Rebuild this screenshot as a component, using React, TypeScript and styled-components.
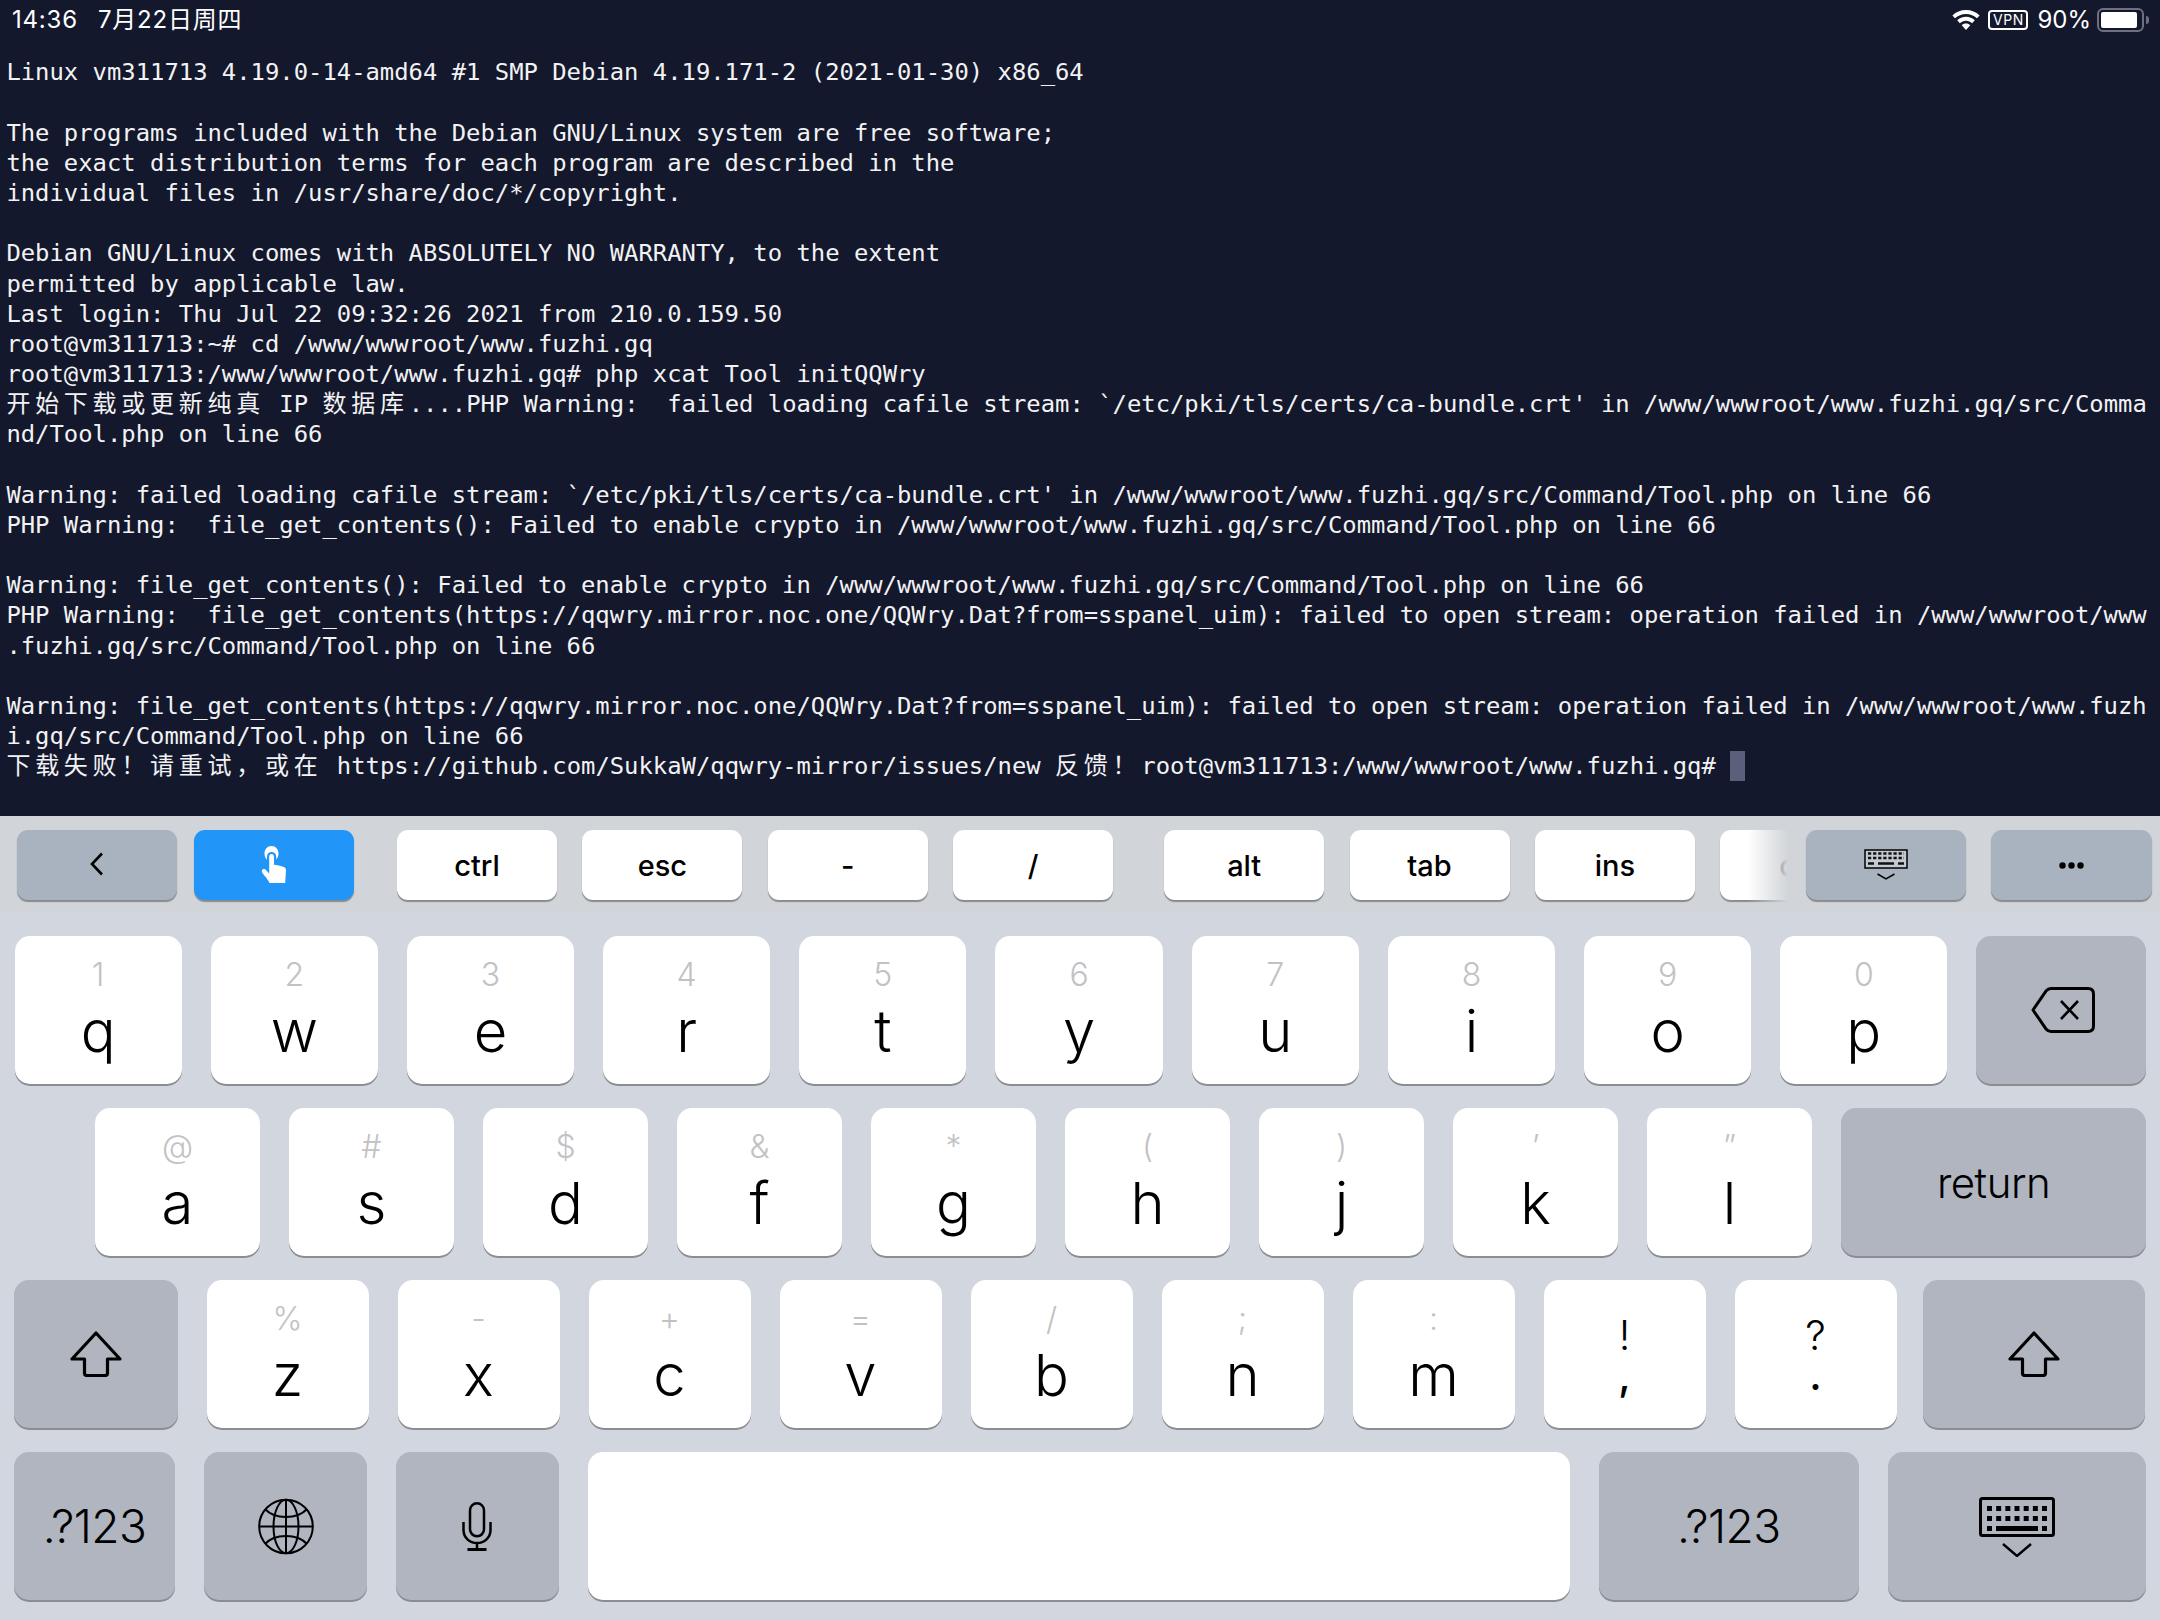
import React from 'react'
import styled, { createGlobalStyle } from 'styled-components'

const CELL = 14.37

const GlobalStyle = createGlobalStyle`
  html, body {
    margin: 0;
    padding: 0;
    width: 2160px;
    height: 1620px;
    overflow: hidden;
    background: #14182c;
  }
`

const Page = styled.div`
  width: 2160px;
  height: 1620px;
  display: flex;
  flex-direction: column;
  font-family: Inter, "Noto Sans CJK SC", sans-serif;
`

/* status bar + terminal */
const Terminal = styled.div`
  height: 816px;
  flex-shrink: 0;
  background: #14182c;
  color: #f2f2f4;
`

const StatusBar = styled.div`
  height: 57.3px;
  padding: 0 16px 0 12px;
  box-sizing: border-box;
  display: flex;
  align-items: flex-start;
  justify-content: space-between;
  color: #fff;
  font-size: 24px;
  line-height: 40px;
`

const StatusLeft = styled.div`
  display: flex;
  gap: 20px;
  letter-spacing: 0.8px;
`

const StatusRight = styled.div`
  display: flex;
  align-items: center;
  height: 40px;
`

const VpnBadge = styled.div`
  width: 40px;
  height: 20px;
  margin-left: 8px;
  box-sizing: border-box;
  border: 2px solid #fff;
  border-radius: 4px;
  font-size: 14px;
  line-height: 16px;
  text-align: center;
  letter-spacing: 0.5px;
`

const Percent = styled.div`
  margin-left: 9px;
`

const Battery = styled.div`
  position: relative;
  width: 47px;
  height: 24px;
  margin-left: 6px;
  box-sizing: border-box;
  border: 2px solid #6e7080;
  border-radius: 6px;
  padding: 2px;

  &::after {
    content: '';
    position: absolute;
    right: -7px;
    top: 6px;
    width: 3px;
    height: 8px;
    background: #6e7080;
    border-radius: 0 3px 3px 0;
  }
`

const BatteryFill = styled.div`
  width: 36px;
  height: 16px;
  background: #fff;
  border-radius: 2px;
`

const Screen = styled.div`
  padding-left: 6.4px;
  font-family: "DejaVu Sans Mono", monospace;
  font-size: 23.87px;
`

const Row = styled.div`
  height: 30.18px;
  line-height: 30.18px;
  white-space: pre;
`

const Wide = styled.span`
  display: inline-block;
  width: ${CELL * 2}px;
  font-family: "Noto Sans CJK SC", sans-serif;
  font-size: 24px;
  line-height: 24px;
`

const Cursor = styled.span`
  display: inline-block;
  width: ${CELL}px;
  height: 30px;
  vertical-align: top;
  background: #5a5f7b;
`

/* shortcut bar */
const Toolbar = styled.div`
  height: 97px;
  flex-shrink: 0;
  box-sizing: border-box;
  padding: 14px 8px 0 17px;
  display: flex;
  background: #d1d4d9;
`

const ToolGroup = styled.div<{ $gap: number; $before?: number }>`
  display: flex;
  flex-shrink: 0;
  gap: ${(p) => p.$gap}px;
  margin-left: ${(p) => p.$before ?? 0}px;
`

const Scroller = styled.div`
  position: relative;
  flex: 1;
  min-width: 0;
  height: 76px;
  margin-left: 43px;
  overflow: hidden;
  display: flex;

  &::after {
    content: '';
    position: absolute;
    top: 0;
    right: 0;
    bottom: 0;
    width: 40px;
    background: linear-gradient(90deg, rgba(209, 212, 217, 0), #d1d4d9);
  }
`

const ToolKey = styled.div<{ $tone?: 'white' | 'slate' | 'blue'; $w?: number }>`
  width: ${(p) => p.$w ?? 160}px;
  height: 70px;
  flex-shrink: 0;
  border-radius: 11px;
  display: flex;
  flex-direction: column;
  align-items: center;
  justify-content: center;
  background: ${(p) => (p.$tone === 'slate' ? '#a8b3bf' : p.$tone === 'blue' ? '#2196f8' : '#fff')};
  box-shadow: 0 2px 1px rgba(0, 0, 0, 0.35);
  font-size: 29px;
  font-weight: 500;
  color: #000;
`

/* keyboard */
const Keyboard = styled.div`
  flex: 1;
  box-sizing: border-box;
  padding-top: 23px;
  display: flex;
  flex-direction: column;
  gap: 24px;
  background: #d2d6de;
`

const KeyRow = styled.div<{ $inset: number }>`
  display: flex;
  gap: 29px;
  padding-left: ${(p) => p.$inset}px;
`

const Key = styled.div<{ $w: number; $fn?: boolean }>`
  width: ${(p) => p.$w}px;
  height: 148px;
  flex-shrink: 0;
  box-sizing: border-box;
  border-radius: 15px;
  display: flex;
  flex-direction: column;
  align-items: center;
  justify-content: center;
  background: ${(p) => (p.$fn ? '#b0b5c0' : '#fff')};
  box-shadow: 0 2px 0 #8c8d92;
  color: #000;
`

const RightShift = styled(Key)`
  margin-left: -2.5px;
`

const LetterBody = styled(Key)`
  justify-content: flex-start;
  padding-top: 18.5px;
`

const Hint = styled.div`
  height: 40px;
  font-size: 32px;
  line-height: 40px;
  font-weight: 300;
  color: #c2c2c4;
`

const Letter = styled.div`
  font-size: 58px;
  line-height: 73px;
  font-weight: 300;
`

const PunctBody = styled(Key)`
  justify-content: flex-start;
  padding-top: 35px;
`

const Punct = styled.div<{ $strong?: boolean }>`
  height: 40px;
  font-size: 41px;
  line-height: 40px;
  font-weight: ${(p) => (p.$strong ? 500 : 300)};
`

const FnLabel = styled.div<{ $size: number; $weight?: number }>`
  font-size: ${(p) => p.$size}px;
  font-weight: ${(p) => p.$weight ?? 300};
  letter-spacing: -0.5px;
`

/* icons */
const Glyph = styled.svg<{ $dx?: number; $dy?: number }>`
  display: block;
  margin-left: ${(p) => p.$dx ?? 0}px;
  margin-top: ${(p) => p.$dy ?? 0}px;
`

const ChevronLeft = () => (
  <Glyph $dy={-3} width="16" height="24" viewBox="0 0 16 24" fill="none" stroke="#000" strokeWidth="2.6">
    <path d="M13 1.5 3 12l10 10.5" />
  </Glyph>
)

const TouchHand = () => (
  <Glyph $dx={2} $dy={-3} width="30" height="38" viewBox="0 0 30 38" fill="#fff">
    <path fillRule="evenodd" d="M11.5 1c4.2 0 7 3.4 7 7.6 0 2.6-1 4.6-2.3 6V11.5c0-2.8-2-4.6-4.6-4.6S7 8.7 7 11.5v3.3c-1.5-1.4-2.5-3.6-2.5-6.2C4.500 4.400 7.300 1 11.500 1z" />
    <path d="M9.200 11.500c0-1.500 1-2.500 2.400-2.500s2.400 1 2.400 2.500v8.300c3 .2 6.300.9 9 1.900 2 .7 3 1.700 3 3.500l-.8 12.800H9.500c-.5-2-3.500-5.500-7-10-1.200-1.600-.8-3 .4-3.700 1.300-.7 2.500 0 3.500 1.100l2.800 3.100z" />
  </Glyph>
)

const SmallKeyboard = () => (
  <Glyph $dy={-1} width="44" height="32" viewBox="0 0 44 32">
    <rect x="1" y="1" width="42" height="18" fill="#c3cad2" stroke="#000" strokeWidth="1.500" />
    <path d="M4 4.500h36M4 9h36" stroke="#111" strokeWidth="2.500" strokeDasharray="3.200 1.900" />
    <path d="M4 14.500h6M14 14.500h16M34 14.500h6" stroke="#111" strokeWidth="2.500" />
    <path d="M13.500 25 22 30l8.500-5" fill="none" stroke="#000" strokeWidth="1.500" />
  </Glyph>
)

const Dots = () => (
  <Glyph width="25" height="7" viewBox="0 0 25 7" fill="#000">
    <circle cx="3.500" cy="3.500" r="3.200" />
    <circle cx="12.500" cy="3.500" r="3.200" />
    <circle cx="21.500" cy="3.500" r="3.200" />
  </Glyph>
)

const Backspace = () => (
  <Glyph $dx={4} width="64" height="46" viewBox="0 0 64 46" fill="none" stroke="#000" strokeWidth="3" strokeLinejoin="round">
    <path d="M20 1.500h37c3.500 0 5.500 2 5.500 5.500v32c0 3.500-2 5.500-5.500 5.500H20c-2 0-3.500-.7-4.700-2.200L2 23 15.300 3.700C16.500 2.200 18 1.500 20 1.500z" />
    <path d="M30 14l17 18M47 14 30 32" strokeWidth="2.600" />
  </Glyph>
)

const ShiftArrow = () => (
  <Glyph width="52" height="46" viewBox="0 0 52 46" fill="none" stroke="#000" strokeWidth="3.200" strokeLinejoin="round">
    <path d="M26 2 2 28h12.500v14c0 1.500 1 2.500 2.500 2.500h18c1.500 0 2.500-1 2.500-2.500V28H50z" />
  </Glyph>
)

const Globe = () => (
  <Glyph width="56" height="57" viewBox="0 0 56 57" fill="none" stroke="#000" strokeWidth="2">
    <circle cx="28" cy="28.500" r="26.800" />
    <ellipse cx="28" cy="28.500" rx="12.500" ry="26.800" />
    <path d="M28 1.700v53.600M1.200 28.500h53.600" />
    <path d="M7 11c5 5.500 12.500 8 21 8s16-2.500 21-8M7 46c5-5.500 12.500-8 21-8s16 2.500 21 8" />
  </Glyph>
)

const Mic = () => (
  <Glyph width="30" height="49" viewBox="0 0 30 49" fill="none" stroke="#000" strokeWidth="2.500">
    <rect x="8" y="1.300" width="14" height="33" rx="7" />
    <path d="M1.500 20v8c0 7.500 6 13 13.500 13s13.500-5.500 13.500-13v-8M15 41v6.500" />
    <path d="M5.500 47.500h19" strokeWidth="3" />
  </Glyph>
)

const BigKeyboard = () => (
  <Glyph $dy={2} width="76" height="60" viewBox="0 0 76 60">
    <rect x="1.500" y="1.500" width="73" height="37" rx="2" fill="none" stroke="#000" strokeWidth="3" />
    <path d="M8 11.500h60M8 21.500h60" stroke="#000" strokeWidth="5" strokeDasharray="5 4.170" />
    <path d="M8 31.500h5M17 31.500h42M63 31.500h5" stroke="#000" strokeWidth="5" />
    <path d="M24 47l14 12 14-12" fill="none" stroke="#000" strokeWidth="2.400" />
  </Glyph>
)

const WifiIcon = () => (
  <Glyph width="28" height="20" viewBox="0 0 28 20" fill="#fff">
    <path d="M14 0C8.700 0 4 2 .4 5.400l2.600 2.800C5.900 5.500 9.700 3.900 14 3.900s8.100 1.600 11 4.300l2.600-2.800C24 2 19.300 0 14 0z" />
    <path d="M14 6.800c-3.400 0-6.500 1.300-8.800 3.500l2.700 2.900c1.600-1.500 3.700-2.400 6.100-2.400s4.500.9 6.100 2.400l2.700-2.900c-2.300-2.200-5.400-3.500-8.800-3.500z" />
    <path d="M14 13.600c-1.700 0-3.200.6-4.300 1.700L14 20l4.300-4.700c-1.100-1.100-2.600-1.700-4.300-1.700z" />
  </Glyph>
)

/* data */
const LINES = [
  'Linux vm311713 4.19.0-14-amd64 #1 SMP Debian 4.19.171-2 (2021-01-30) x86_64',
  '',
  'The programs included with the Debian GNU/Linux system are free software;',
  'the exact distribution terms for each program are described in the',
  'individual files in /usr/share/doc/*/copyright.',
  '',
  'Debian GNU/Linux comes with ABSOLUTELY NO WARRANTY, to the extent',
  'permitted by applicable law.',
  'Last login: Thu Jul 22 09:32:26 2021 from 210.0.159.50',
  'root@vm311713:~# cd /www/wwwroot/www.fuzhi.gq',
  'root@vm311713:/www/wwwroot/www.fuzhi.gq# php xcat Tool initQQWry',
  "开始下载或更新纯真 IP 数据库....PHP Warning:  failed loading cafile stream: `/etc/pki/tls/certs/ca-bundle.crt' in /www/wwwroot/www.fuzhi.gq/src/Comma",
  'nd/Tool.php on line 66',
  '',
  "Warning: failed loading cafile stream: `/etc/pki/tls/certs/ca-bundle.crt' in /www/wwwroot/www.fuzhi.gq/src/Command/Tool.php on line 66",
  'PHP Warning:  file_get_contents(): Failed to enable crypto in /www/wwwroot/www.fuzhi.gq/src/Command/Tool.php on line 66',
  '',
  'Warning: file_get_contents(): Failed to enable crypto in /www/wwwroot/www.fuzhi.gq/src/Command/Tool.php on line 66',
  'PHP Warning:  file_get_contents(https://qqwry.mirror.noc.one/QQWry.Dat?from=sspanel_uim): failed to open stream: operation failed in /www/wwwroot/www',
  '.fuzhi.gq/src/Command/Tool.php on line 66',
  '',
  'Warning: file_get_contents(https://qqwry.mirror.noc.one/QQWry.Dat?from=sspanel_uim): failed to open stream: operation failed in /www/wwwroot/www.fuzh',
  'i.gq/src/Command/Tool.php on line 66',
  '下载失败！请重试，或在 https://github.com/SukkaW/qqwry-mirror/issues/new 反馈！root@vm311713:/www/wwwroot/www.fuzhi.gq# ',
]

const ROW_ONE = [['1', 'q'], ['2', 'w'], ['3', 'e'], ['4', 'r'], ['5', 't'], ['6', 'y'], ['7', 'u'], ['8', 'i'], ['9', 'o'], ['0', 'p']]
const ROW_TWO = [['@', 'a'], ['#', 's'], ['$', 'd'], ['&', 'f'], ['*', 'g'], ['(', 'h'], [')', 'j'], ['’', 'k'], ['”', 'l']]
const ROW_THREE = [['%', 'z'], ['-', 'x'], ['+', 'c'], ['=', 'v'], ['/', 'b'], [';', 'n'], [':', 'm']]

// terminal cells: cjk takes two columns, same as xterm does
function TermLine({ text }: { text: string }) {
  const parts = text.split(/([\u3000-\u9fff\uff00-\uffef])/).filter(Boolean)
  return (
    <Row>
      {parts.map((part, i) =>
        /^[\u3000-\u9fff\uff00-\uffef]$/.test(part) ? <Wide key={i}>{part}</Wide> : <span key={i}>{part}</span>
      )}
      {text.endsWith('# ') && <Cursor />}
    </Row>
  )
}

function LetterKey({ hint, letter, w }: { hint: string; letter: string; w: number }) {
  return (
    <LetterBody $w={w}>
      <Hint>{hint}</Hint>
      <Letter>{letter}</Letter>
    </LetterBody>
  )
}

export default function App() {
  return (
    <Page>
      <GlobalStyle />
      <Terminal>
        <StatusBar>
          <StatusLeft>
            <span>14:36</span>
            <span>7月22日周四</span>
          </StatusLeft>
          <StatusRight>
            <WifiIcon />
            <VpnBadge>VPN</VpnBadge>
            <Percent>90%</Percent>
            <Battery>
              <BatteryFill />
            </Battery>
          </StatusRight>
        </StatusBar>
        <Screen>
          {LINES.map((line, i) => (
            <TermLine key={i} text={line} />
          ))}
        </Screen>
      </Terminal>

      <Toolbar>
        <ToolGroup $gap={17}>
          <ToolKey $tone="slate"><ChevronLeft /></ToolKey>
          <ToolKey $tone="blue"><TouchHand /></ToolKey>
        </ToolGroup>
        <Scroller>
          <ToolGroup $gap={25.4}>
            <ToolKey>ctrl</ToolKey>
            <ToolKey>esc</ToolKey>
            <ToolKey>-</ToolKey>
            <ToolKey>/</ToolKey>
          </ToolGroup>
          <ToolGroup $gap={25.4} $before={51}>
            <ToolKey>alt</ToolKey>
            <ToolKey>tab</ToolKey>
            <ToolKey>ins</ToolKey>
            <ToolKey>del</ToolKey>
          </ToolGroup>
        </Scroller>
        <ToolGroup $gap={25} $before={18}>
          <ToolKey $tone="slate"><SmallKeyboard /></ToolKey>
          <ToolKey $tone="slate" $w={161}><Dots /></ToolKey>
        </ToolGroup>
      </Toolbar>

      <Keyboard>
        <KeyRow $inset={14.5}>
          {ROW_ONE.map(([hint, letter]) => (
            <LetterKey key={letter} hint={hint} letter={letter} w={167.2} />
          ))}
          <Key $w={169.5} $fn><Backspace /></Key>
        </KeyRow>
        <KeyRow $inset={95}>
          {ROW_TWO.map(([hint, letter]) => (
            <LetterKey key={letter} hint={hint} letter={letter} w={165} />
          ))}
          <Key $w={305} $fn><FnLabel $size={42} $weight={350}>return</FnLabel></Key>
        </KeyRow>
        <KeyRow $inset={14}>
          <Key $w={163.5} $fn><ShiftArrow /></Key>
          {ROW_THREE.map(([hint, letter]) => (
            <LetterKey key={letter} hint={hint} letter={letter} w={162} />
          ))}
          <PunctBody $w={162}>
            <Punct>!</Punct>
            <Punct $strong>,</Punct>
          </PunctBody>
          <PunctBody $w={162}>
            <Punct>?</Punct>
            <Punct $strong>.</Punct>
          </PunctBody>
          <RightShift $w={222} $fn><ShiftArrow /></RightShift>
        </KeyRow>
        <KeyRow $inset={14}>
          <Key $w={161} $fn><FnLabel $size={46}>.?123</FnLabel></Key>
          <Key $w={163} $fn><Globe /></Key>
          <Key $w={162.5} $fn><Mic /></Key>
          <Key $w={982.5} />
          <Key $w={259.5} $fn><FnLabel $size={46}>.?123</FnLabel></Key>
          <Key $w={258} $fn><BigKeyboard /></Key>
        </KeyRow>
      </Keyboard>
    </Page>
  )
}
